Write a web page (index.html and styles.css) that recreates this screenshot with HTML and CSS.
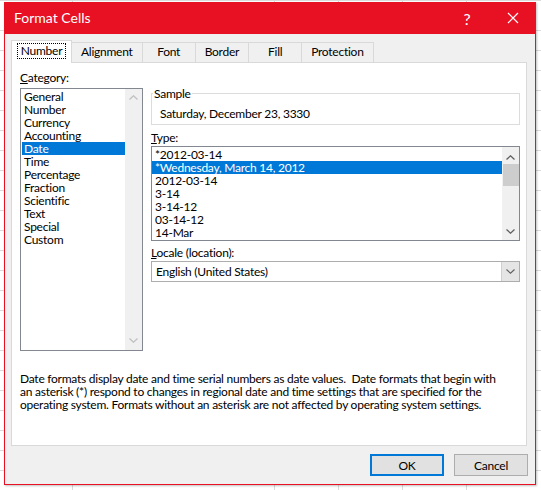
FILE: index.html
```html
<!DOCTYPE html>
<html lang="en">
<head>
  <meta charset="UTF-8" />
  <title>Format Cells</title>
  <link rel="stylesheet" href="styles.css">
</head>
<body>

<div class="dialog">
  <div class="titlebar">
    <span class="title">Format Cells</span>
    <span class="help">?</span>
    <span class="close">
      <svg width="12" height="12" viewBox="0 0 12 12"><path d="M1 1 L11 11 M11 1 L1 11" stroke="#fff" stroke-width="1.2" fill="none"/></svg>
    </span>
  </div>

  <div class="content">
    <div class="tabs">
      <div class="tab active"><span class="focus">Number</span></div>
      <div class="tab">Alignment</div>
      <div class="tab">Font</div>
      <div class="tab">Border</div>
      <div class="tab">Fill</div>
      <div class="tab">Protection</div>
    </div>

    <div class="panel">
      <div class="panel-main">
        <div class="col-left">
          <div class="label"><u>C</u>ategory:</div>
          <div class="listbox category">
            <div class="items">
              <div class="item">General</div>
              <div class="item">Number</div>
              <div class="item">Currency</div>
              <div class="item">Accounting</div>
              <div class="item selected">Date</div>
              <div class="item">Time</div>
              <div class="item">Percentage</div>
              <div class="item">Fraction</div>
              <div class="item">Scientific</div>
              <div class="item">Text</div>
              <div class="item">Special</div>
              <div class="item">Custom</div>
            </div>
            <div class="scrollbar disabled">
              <svg class="arrow" width="9" height="5" viewBox="0 0 9 5"><path d="M0.5 4.5 L4.5 0.8 L8.5 4.5" stroke="currentColor" stroke-width="1.3" fill="none"/></svg>
              <svg class="arrow" width="9" height="5" viewBox="0 0 9 5"><path d="M0.5 0.5 L4.5 4.2 L8.5 0.5" stroke="currentColor" stroke-width="1.3" fill="none"/></svg>
            </div>
          </div>
        </div>

        <div class="col-right">
          <fieldset class="sample">
            <legend>Sample</legend>
            <div class="sample-text">Saturday, December 23, 3330</div>
          </fieldset>

          <div class="label type-label"><u>T</u>ype:</div>
          <div class="listbox types">
            <div class="items">
              <div class="item">*2012-03-14</div>
              <div class="item selected">*Wednesday, March 14, 2012</div>
              <div class="item">2012-03-14</div>
              <div class="item">3-14</div>
              <div class="item">3-14-12</div>
              <div class="item">03-14-12</div>
              <div class="item">14-Mar</div>
            </div>
            <div class="scrollbar">
              <svg class="arrow" width="9" height="5" viewBox="0 0 9 5"><path d="M0.5 4.5 L4.5 0.8 L8.5 4.5" stroke="currentColor" stroke-width="1.3" fill="none"/></svg>
              <div class="thumb"></div>
              <div class="track"></div>
              <svg class="arrow" width="9" height="5" viewBox="0 0 9 5"><path d="M0.5 0.5 L4.5 4.2 L8.5 0.5" stroke="currentColor" stroke-width="1.3" fill="none"/></svg>
            </div>
          </div>

          <div class="label locale-label"><u>L</u>ocale (location):</div>
          <div class="combo">
            <span class="combo-value">English (United States)</span>
            <span class="combo-btn">
              <svg width="9" height="5" viewBox="0 0 9 5"><path d="M0.5 0.5 L4.5 4.2 L8.5 0.5" stroke="#606060" stroke-width="1.1" fill="none"/></svg>
            </span>
          </div>
        </div>
      </div>

      <p class="hint">
        Date formats display date and time serial numbers as date values.&nbsp; Date formats that begin with<br>
        an asterisk (*) respond to changes in regional date and time settings that are specified for the<br>
        operating system. Formats without an asterisk are not affected by operating system settings.
      </p>
    </div>

    <div class="buttons">
      <button class="btn default">OK</button>
      <button class="btn">Cancel</button>
    </div>
  </div>
</div>

</body>
</html>
```

FILE: styles.css
```css
body {
  margin: 0;
  padding: 2px 0 0 4px;
  height: 490px;
  box-sizing: border-box;
  overflow: hidden;
  font-family: Lato, 'Noto Sans', sans-serif;
  font-size: 12px;
  letter-spacing: -0.25px;
  color: #000;
  background-color: #fff;
  /* spreadsheet grid behind the dialog */
  background-image:
    repeating-linear-gradient(to bottom, transparent 0, transparent 19px, #dadada 19px, #dadada 20px),
    linear-gradient(to right, transparent 72px, #dadada 72px, #dadada 73px, transparent 73px,
                              transparent 274px, #dadada 274px, #dadada 275px, transparent 275px,
                              transparent 338px, #dadada 338px, #dadada 339px, transparent 339px,
                              transparent 402px, #dadada 402px, #dadada 403px, transparent 403px,
                              transparent 466px, #dadada 466px, #dadada 467px, transparent 467px);
  background-position: 0 11px, 0 0;
}

.dialog {
  width: 532px;
  height: 483px;
  box-sizing: border-box;
  border: 1px solid #e81123;
  border-top: none;
  background: #f0f0f0;
  box-shadow: 1px 1px 2px rgba(0, 0, 0, 0.25);
  display: flex;
  flex-direction: column;
}

/* title bar */
.titlebar {
  height: 32px;
  margin: 0 -1px;
  background: #e81123;
  color: #fff;
  display: flex;
  align-items: center;
  padding: 0 0 0 10px;
  letter-spacing: 0;
}

.title {
  font-size: 14px;
  flex: 1;
  padding-bottom: 1px;
}

.help {
  font-size: 16px;
  width: 46px;
  text-align: center;
}

.close {
  width: 46px;
  height: 32px;
  display: flex;
  align-items: center;
  justify-content: center;
}

.content {
  padding: 6px 7px 0 6px;
}

/* tabs */
.tabs {
  display: flex;
  align-items: flex-end;
  height: 22px;
}

.tab {
  height: 20px;
  box-sizing: border-box;
  min-width: 54px;
  padding: 0 9px;
  border: 1px solid #d9d9d9;
  border-bottom: none;
  margin-left: -1px;
  background: #f0f0f0;
  text-align: center;
  line-height: 18px;
}

.tab:first-child {
  margin-left: 0;
}

.tab.active {
  height: 23px;
  margin-bottom: -1px;
  width: 61px;
  padding: 3px 3px 0;
  background: #fff;
  position: relative;
  z-index: 1;
  line-height: 14px;
}

.tab.active + .tab {
  border-left-color: transparent;
}

.focus {
  display: inline-block;
  outline: 1px dotted #000;
  padding: 0 3px;
  line-height: 14px;
}

.panel {
  width: 516px;
  height: 384px;
  box-sizing: border-box;
  border: 1px solid #d9d9d9;
  background: #fff;
  padding: 8px 6px 0 8px;
}

.panel-main {
  display: flex;
  gap: 8px;
}

.label {
  line-height: 13px;
  height: 13px;
}

/* list boxes */
.listbox {
  border: 1px solid #828790;
  display: flex;
  box-sizing: border-box;
  overflow: hidden;
  line-height: 13px;
}

.items {
  flex: 1;
}

.item {
  height: 13px;
  white-space: nowrap;
}

.item.selected {
  background: #0078d7;
  color: #fff;
}

.category {
  width: 123px;
  height: 263px;
  margin-top: 4px;
  padding: 1px 0 0 1px;
}

.category .item {
  padding-left: 2px;
}

.scrollbar {
  width: 17px;
  background: #f0f0f0;
  display: flex;
  flex-direction: column;
  align-items: center;
  color: #606060;
}

.scrollbar.disabled {
  color: #c0c0c0;
  justify-content: space-between;
  padding: 6px 0 7px;
  margin-top: -1px;
}

.scrollbar .arrow {
  flex: none;
}

.types {
  width: 369px;
  height: 95px;
  margin-top: 2px;
  padding-top: 1px;
}

.types .item {
  padding-left: 3px;
}

.types .scrollbar {
  margin-top: -1px;
  padding: 8px 0 6px;
}

.thumb {
  width: 16px;
  height: 22px;
  margin-top: 4px;
  background: #cdcdcd;
}

.track {
  flex: 1;
}

.col-right {
  width: 369px;
}

.sample {
  margin: 16px 0 0;
  padding: 7px 8px 4px;
  border: 1px solid #dcdcdc;
  min-width: 0;
}

.sample legend {
  padding: 0 1px;
  margin-left: -7px;
  line-height: 13px;
}

.sample-text {
  line-height: 13px;
}

.type-label {
  margin-top: 6px;
}

.locale-label {
  margin-top: 5px;
}

.combo {
  margin-top: 2px;
  height: 21px;
  box-sizing: border-box;
  border: 1px solid #adadad;
  display: flex;
  align-items: center;
}

.combo-value {
  flex: 1;
  padding-left: 4px;
}

.combo-btn {
  width: 17px;
  height: 19px;
  background: #e5e5e5;
  border-left: 1px solid #cfcfcf;
  display: flex;
  align-items: center;
  justify-content: center;
}

.hint {
  margin: 21px 0 0;
  line-height: 13px;
  white-space: nowrap;
}

/* dialog buttons */
.buttons {
  display: flex;
  justify-content: flex-end;
  gap: 10px;
  margin-top: 8px;
  width: 517px;
}

.btn {
  width: 74px;
  height: 22px;
  box-sizing: border-box;
  border: 1px solid #adadad;
  background: #e1e1e1;
  font-family: inherit;
  font-size: 12px;
  letter-spacing: inherit;
  color: #000;
  padding: 0;
}

.btn.default {
  border: 2px solid #0078d7;
}
```
